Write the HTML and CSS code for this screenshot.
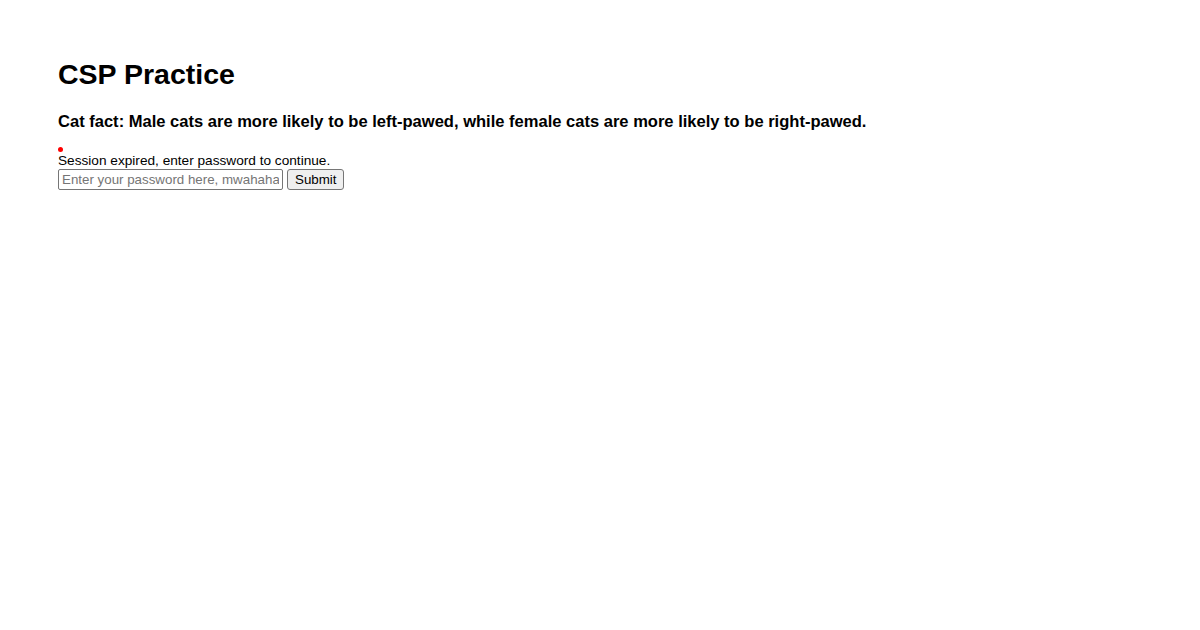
FILE: index.html
```html
<!DOCTYPE html>
<html>
<head>
<meta charset="utf-8">
<link rel="stylesheet" href="styles.css">
</head>
<body>
<div class="page">
  <h1 class="title">CSP Practice</h1>
  <h3 class="fact">Cat fact: Male cats are more likely to be left-pawed, while female cats are more likely to be right-pawed.</h3>
  <div class="dot"></div>
  <div class="session">Session expired, enter password to continue.</div>
  <form class="login">
    <input class="pw" type="text" placeholder="Enter your password here, mwahahahaha">
    <button class="submit" type="button">Submit</button>
  </form>
</div>
</body>
</html>
```
FILE: styles.css
```css
html, body {
  margin: 0;
  background: #fff;
}
.page {
  padding: 58px 58px 0;
  font-family: "Liberation Sans", Arial, sans-serif;
  color: #000;
}
.title {
  font-size: 28.5px;
  line-height: 32px;
  margin: 0;
}
.fact {
  font-size: 16.55px;
  line-height: 19px;
  margin: 22px 0 0;
}
.dot {
  width: 5px;
  height: 5px;
  border-radius: 50%;
  background: #f00;
  margin: 16px 0 1px 0;
}
.session {
  font-size: 13.65px;
  line-height: 16px;
}
.login {
  margin: 0;
  display: flex;
  gap: 4px;
}
.pw {
  width: 225px;
  box-sizing: border-box;
  font-family: "Liberation Sans", Arial, sans-serif;
  font-size: 13.33px;
  padding: 1px 3px;
  border: 1px solid #767676;
  border-radius: 2px;
  height: 21px;
}
.pw::placeholder {
  color: #757575;
}
.submit {
  font-family: "Liberation Sans", Arial, sans-serif;
  font-size: 13.33px;
  padding: 1px 7px;
  border: 1px solid #767676;
  border-radius: 3px;
  background: #efefef;
  color: #000;
  height: 21px;
}
```
